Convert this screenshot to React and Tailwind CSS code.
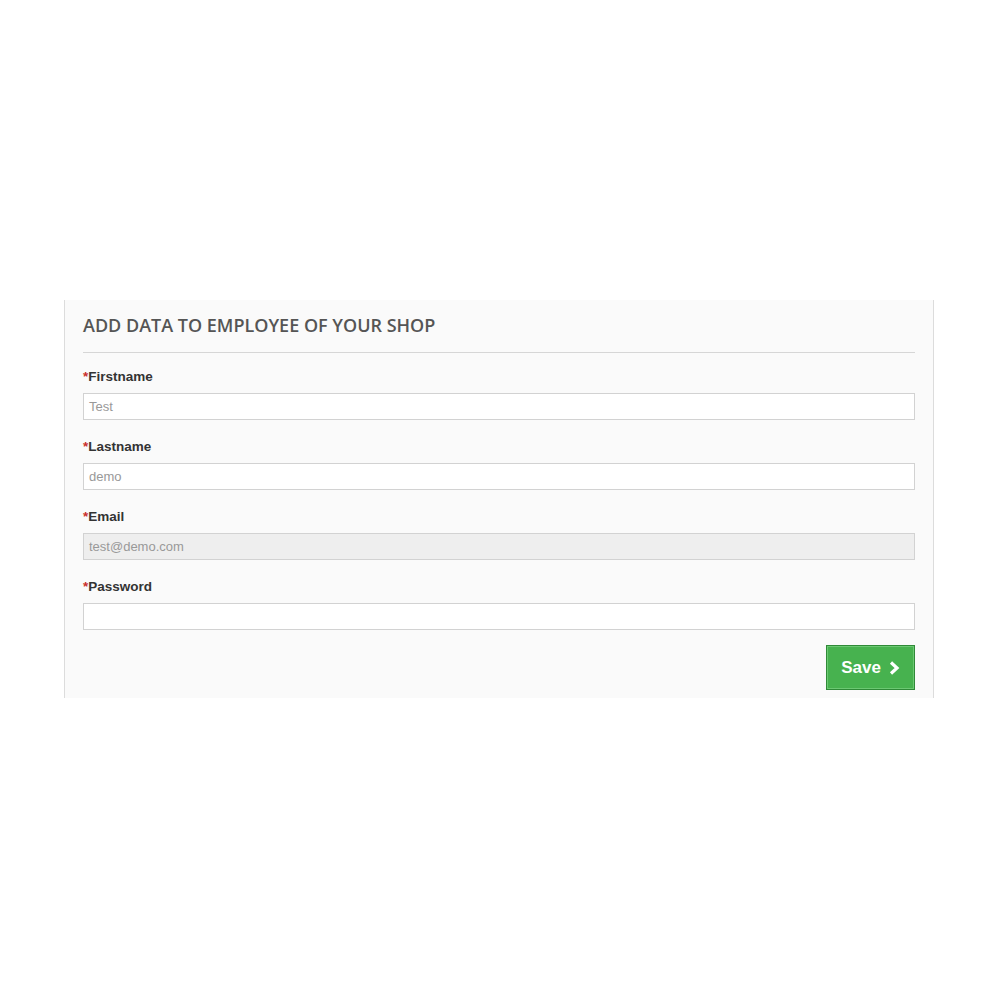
const Field = ({ label, value, disabled }) => {
  return (
    <div className="flex flex-col">
      <label className="text-[13.5px] leading-[18px] font-bold text-[#333] font-['Liberation_Sans',Arial,sans-serif]">
        <span className="text-[#c9302c]">*</span>
        {label}
      </label>
      <div
        className={`mt-[7px] h-[27px] border border-[#d2d2d2] px-[5px] flex items-center text-[13px] text-[#999] font-['Liberation_Sans',Arial,sans-serif] ${
          disabled ? "bg-[#eeeeee]" : "bg-white"
        }`}
      >
        {value}
      </div>
    </div>
  );
};

const App = () => {
  return (
    <div className="w-[1000px] h-[1000px] bg-white pt-[300px] pl-[64px]">
      <section className="w-[870px] h-[398px] bg-[#fafafa] border-l border-r border-[#dcdcdc] px-[18px]">
        <h2 className="pt-[13px] pb-[15px] text-[18px] leading-[24px] font-semibold text-[#555] font-['Open_Sans',sans-serif] border-b border-[#d6d6d6]">
          ADD DATA TO EMPLOYEE OF YOUR SHOP
        </h2>

        <div className="flex flex-col gap-[18px] pt-[15px]">
          <Field label="Firstname" value="Test" />
          <Field label="Lastname" value="demo" />
          <Field label="Email" value="test@demo.com" disabled />
          <Field label="Password" value="" />
        </div>

        <div className="flex justify-end mt-[15px]">
          <button className="w-[89px] h-[45px] bg-[#47b24f] border border-[#2f8a37] shadow-[inset_0_0_0_1px_#6cc873] flex items-center justify-center gap-[8px] text-white text-[17px] font-bold font-['Liberation_Sans',Arial,sans-serif]">
            Save
            <svg width="11" height="14" viewBox="0 0 11 14">
              <path d="M2 1.5 L8 7 L2 12.5" fill="none" stroke="white" strokeWidth="3.2" />
            </svg>
          </button>
        </div>
      </section>
    </div>
  );
};

export default App;
